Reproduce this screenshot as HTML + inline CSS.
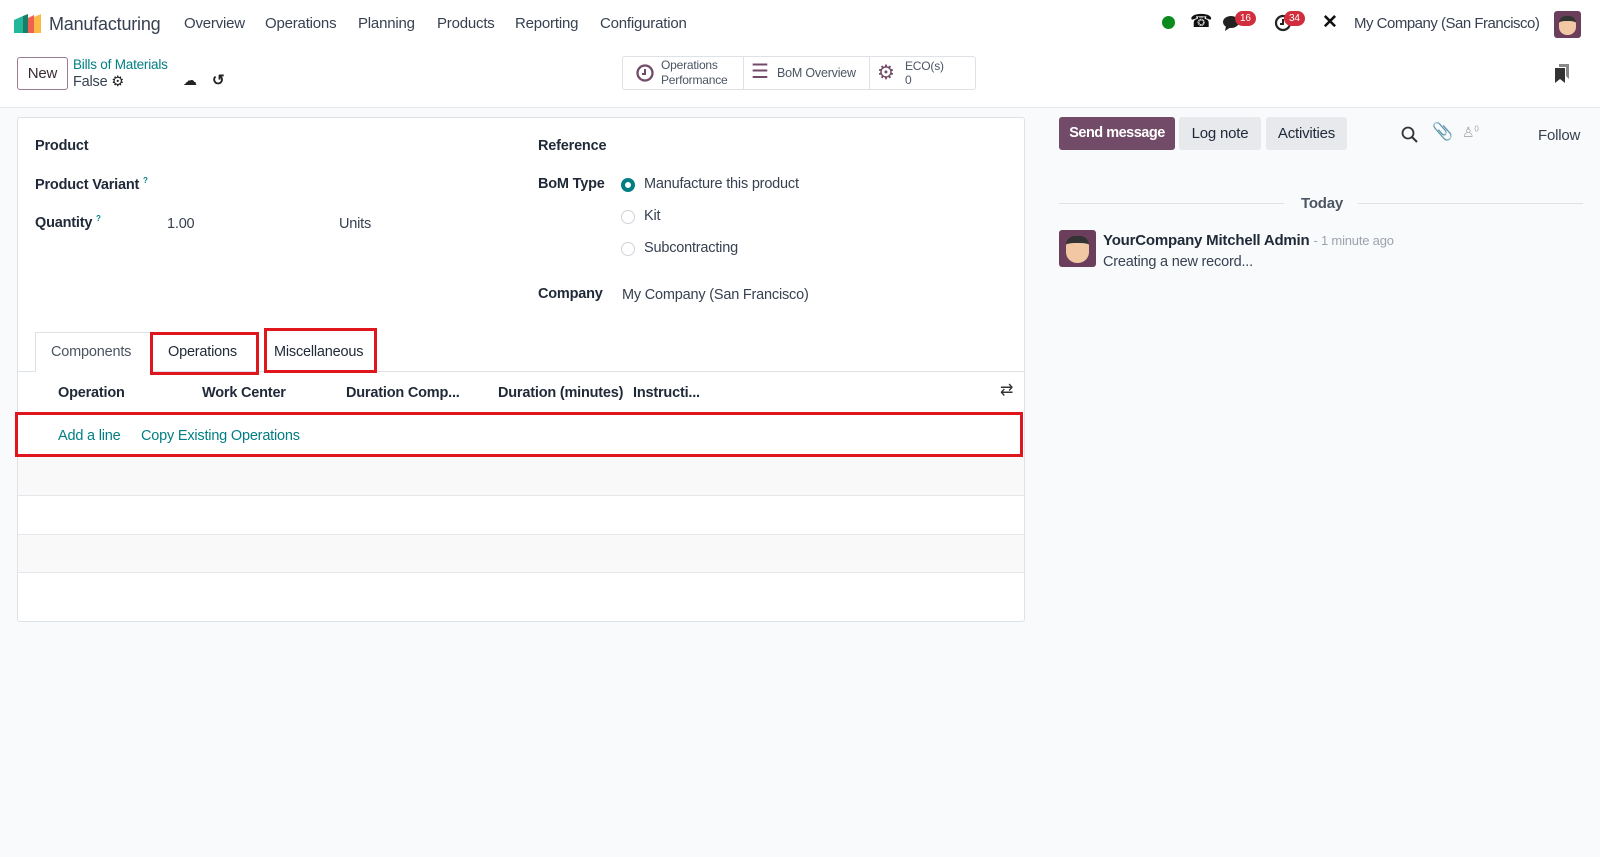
<!DOCTYPE html>
<html><head><meta charset="utf-8"><style>
*{box-sizing:border-box;margin:0;padding:0}
body{width:1600px;height:857px;background:#f9fafb;font-family:"Liberation Sans",sans-serif;color:#374151;position:relative;overflow:hidden;font-size:14.5px;letter-spacing:-0.2px}
.a{position:absolute;white-space:nowrap}
.nav{position:absolute;left:0;top:0;width:1600px;height:47px;background:#fff}
.cp{position:absolute;left:0;top:47px;width:1600px;height:61px;background:#fff;border-bottom:1px solid #e5e7eb}
.nm{font-size:15px;color:#374151;top:15px}
.b{font-weight:bold;color:#1f2937}
.teal{color:#017e84}
.sheet{position:absolute;left:17px;top:117px;width:1008px;height:505px;background:#fff;border:1px solid #dee2e6;border-radius:3px}
.badge{position:absolute;background:#d22d3d;color:#fff;font-size:10px;border-radius:9px;padding:2px 5px;line-height:11px}
.btn{position:absolute;top:117px;height:33px;border-radius:3px;font-size:15px;line-height:33px;text-align:center}
.radio{position:absolute;width:14px;height:14px;border-radius:50%;border:1px solid #cfd4da;background:#fff}
</style></head><body>
<div class="nav">
<svg class="a" style="left:14px;top:14px" width="27" height="19" viewBox="0 0 27 19"><path d="M0 6 L9 2 V19 H0Z" fill="#21b799"/><path d="M9 2 L14 0 V19 H9Z" fill="#1a7d6a"/><path d="M14 4 L20 1 V19 H14Z" fill="#f06050"/><path d="M20 3 L27 0 V19 H20Z" fill="#fbb945"/></svg>
<div class="a" style="left:49px;top:14px;font-size:18px;color:#374151">Manufacturing</div>
<div class="a nm" style="left:184px">Overview</div>
<div class="a nm" style="left:265px">Operations</div>
<div class="a nm" style="left:358px">Planning</div>
<div class="a nm" style="left:437px">Products</div>
<div class="a nm" style="left:515px">Reporting</div>
<div class="a nm" style="left:600px">Configuration</div>
<div class="a" style="left:1162px;top:16px;width:13px;height:13px;border-radius:50%;background:#0b8a1e"></div>
<div class="a" style="left:1190px;top:11px;font-size:18px;color:#111">☎</div>
<svg class="a" style="left:1222px;top:14px" width="22" height="18" viewBox="0 0 22 18"><ellipse cx="9" cy="8" rx="8" ry="6" fill="#222"/><path d="M4 12 L3 17 L9 13Z" fill="#222"/></svg>
<div class="badge" style="left:1235px;top:11px">16</div>
<svg class="a" style="left:1274px;top:14px" width="18" height="18" viewBox="0 0 18 18"><circle cx="9" cy="9" r="7" fill="none" stroke="#222" stroke-width="2.2"/><path d="M9 5V10H6" stroke="#222" stroke-width="2" fill="none"/></svg>
<div class="badge" style="left:1284px;top:11px">34</div>
<div class="a" style="left:1322px;top:11px;font-size:19px;color:#111;font-weight:bold">✕</div>
<div class="a" style="left:1354px;top:15px;font-size:15px;letter-spacing:-0.5px">My Company (San Francisco)</div>
<div class="a" style="left:1554px;top:11px;width:27px;height:27px;background:#6b3f5c;border-radius:3px"><div style="margin:5px 5px;width:17px;height:19px;background:#f2c8a4;border-radius:7px 7px 8px 8px;border-top:5px solid #333"></div></div>
</div>
<div class="cp">
<div class="a" style="left:17px;top:10px;width:51px;height:33px;border:1px solid #9a7b90;border-radius:3px;text-align:center;line-height:31px;font-size:15px;color:#3b2a36">New</div>
<div class="a teal" style="left:73px;top:10px;font-size:13.5px">Bills of Materials</div>
<div class="a" style="left:73px;top:27px;font-size:14.5px">False <span style="color:#222">⚙</span></div>
<div class="a" style="left:183px;top:25px;font-size:14px;color:#222">☁</div>
<div class="a" style="left:212px;top:24px;font-size:15px;color:#222;font-weight:bold">↺</div>
<div class="a" style="left:622px;top:9px;width:354px;height:34px;border:1px solid #dee2e6;border-radius:3px;background:#fff">
 <div class="a" style="left:120px;top:0;width:1px;height:32px;background:#dee2e6"></div>
 <div class="a" style="left:246px;top:0;width:1px;height:32px;background:#dee2e6"></div>
 <svg class="a" style="left:13px;top:7px" width="18" height="18" viewBox="0 0 18 18"><circle cx="9" cy="9" r="7.5" fill="none" stroke="#714b67" stroke-width="2.3"/><path d="M9 5V10H6" stroke="#714b67" stroke-width="2" fill="none"/></svg>
 <div class="a" style="left:38px;top:1px;font-size:12px;line-height:15px;color:#4b5563">Operations<br>Performance</div>
 <div class="a" style="left:128px;top:5px;font-size:20px;color:#714b67;line-height:20px">☰</div>
 <div class="a" style="left:154px;top:9px;font-size:12.5px;color:#4b5563">BoM Overview</div>
 <div class="a" style="left:254px;top:3px;font-size:20px;color:#714b67">⚙</div>
 <div class="a" style="left:282px;top:2px;font-size:12px;line-height:14px;color:#4b5563">ECO(s)<br>0</div>
</div>
<svg class="a" style="left:1555px;top:17px" width="14" height="19" viewBox="0 0 14 19"><path d="M4 0H14V15L11 12V3H4Z" fill="#888"/><path d="M0 4H10V19L5 15L0 19Z" fill="#333"/></svg>
</div>

<div class="sheet">
<div class="a b" style="left:17px;top:20px">Product</div>
<div class="a b" style="left:17px;top:58px">Product Variant <sup style="font-size:8px;color:#017e84">?</sup></div>
<div class="a b" style="left:17px;top:96px">Quantity <sup style="font-size:8px;color:#017e84">?</sup></div>
<div class="a" style="left:149px;top:98px">1.00</div>
<div class="a" style="left:321px;top:98px">Units</div>
<div class="a b" style="left:520px;top:20px">Reference</div>
<div class="a b" style="left:520px;top:58px">BoM Type</div>
<div class="radio" style="left:603px;top:60px;border:4px solid #017e84"></div>
<div class="a" style="left:626px;top:58px">Manufacture this product</div>
<div class="radio" style="left:603px;top:92px"></div>
<div class="a" style="left:626px;top:90px">Kit</div>
<div class="radio" style="left:603px;top:124px"></div>
<div class="a" style="left:626px;top:122px">Subcontracting</div>
<div class="a b" style="left:520px;top:168px">Company</div>
<div class="a" style="left:604px;top:169px">My Company (San Francisco)</div>
<div class="a" style="left:0;top:253px;width:1006px;height:1px;background:#dee2e6"></div>
<div class="a" style="left:17px;top:214px;width:116px;height:40px;border:1px solid #dee2e6;border-bottom:none;background:#fff"></div>
<div class="a" style="left:33px;top:226px;color:#4b5563">Components</div>
<div class="a" style="left:132px;top:214px;width:109px;height:43px;border:3px solid #e0161e"></div>
<div class="a" style="left:150px;top:226px;color:#1f2937">Operations</div>
<div class="a" style="left:246px;top:210px;width:113px;height:45px;border:3px solid #e0161e"></div>
<div class="a" style="left:256px;top:226px;color:#1f2937">Miscellaneous</div>
<div class="a b" style="left:40px;top:267px">Operation</div>
<div class="a b" style="left:184px;top:267px">Work Center</div>
<div class="a b" style="left:328px;top:267px">Duration Comp...</div>
<div class="a b" style="left:480px;top:267px">Duration (minutes)</div>
<div class="a b" style="left:615px;top:267px">Instructi...</div>
<div class="a" style="left:982px;top:262px;font-size:16px;color:#333">⇄</div>
<div class="a" style="left:0;top:339px;width:1006px;height:38px;background:#f9f9f9"></div>
<div class="a" style="left:0;top:377px;width:1006px;height:1px;background:#e5e7eb"></div>
<div class="a" style="left:0;top:416px;width:1006px;height:39px;background:#f9f9f9;border-top:1px solid #e5e7eb;border-bottom:1px solid #e5e7eb"></div>
<div class="a teal" style="left:40px;top:310px">Add a line</div>
<div class="a teal" style="left:123px;top:310px">Copy Existing Operations</div>
</div>
<div class="a" style="left:15px;top:412px;width:1008px;height:45px;border:3px solid #e0161e"></div>

<div class="btn" style="left:1059px;width:116px;background:#714b67;color:#fff;font-weight:bold;font-size:14.5px;letter-spacing:-0.5px">Send message</div>
<div class="btn" style="left:1179px;width:82px;background:#e7e9ed;color:#1f2937">Log note</div>
<div class="btn" style="left:1266px;width:81px;background:#e7e9ed;color:#1f2937">Activities</div>
<svg class="a" style="left:1401px;top:126px" width="17" height="17" viewBox="0 0 17 17"><circle cx="7" cy="7" r="5.5" fill="none" stroke="#333" stroke-width="1.8"/><path d="M11 11L16 16" stroke="#333" stroke-width="2"/></svg>
<div class="a" style="left:1432px;top:122px;font-size:17px;color:#333">📎</div>
<div class="a" style="left:1462px;top:124px;font-size:14px;color:#aaa">♙<sup style="font-size:8px">0</sup></div>
<div class="a" style="left:1538px;top:127px;font-size:15px">Follow</div>
<div class="a" style="left:1059px;top:203px;width:225px;height:1px;background:#dee2e6"></div>
<div class="a" style="left:1358px;top:203px;width:225px;height:1px;background:#dee2e6"></div>
<div class="a" style="left:1301px;top:195px;font-weight:bold;font-size:15px;color:#4b5563">Today</div>
<div class="a" style="left:1059px;top:230px;width:37px;height:37px;background:#6b3f5c;border-radius:3px"><div style="margin:6px 7px;width:23px;height:27px;background:#f2c8a4;border-radius:9px 9px 11px 11px;border-top:7px solid #333"></div></div>
<div class="a" style="left:1103px;top:232px;font-size:15px"><b style="color:#1f2937">YourCompany Mitchell Admin</b> <span style="color:#9ca3af;font-size:13px">- 1 minute ago</span></div>
<div class="a" style="left:1103px;top:254px;font-size:14.5px">Creating a new record...</div>
</body></html>
